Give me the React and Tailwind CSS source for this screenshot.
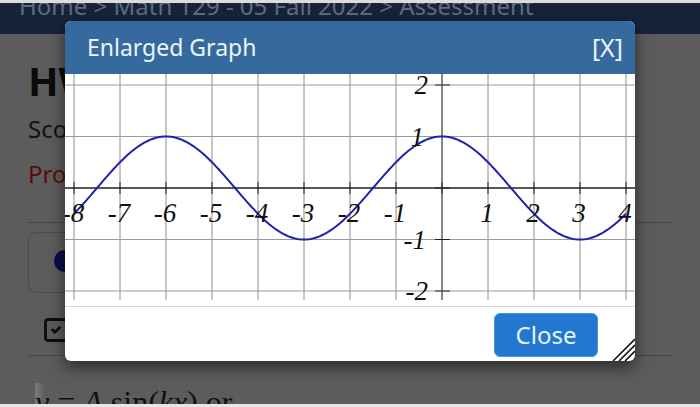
import { SquareCheck } from "lucide-react";

const GRAPH_W = 570;
const GRAPH_H = 231;
const X0 = 377;
const Y0 = 114;
const UX = 46;
const UY = 51.5;

const px = (x) => X0 + x * UX;
const py = (y) => Y0 - y * UY;

const xs = [-8, -7, -6, -5, -4, -3, -2, -1, 0, 1, 2, 3, 4];
const ys = [2, 1, 0, -1, -2];

const curve = Array.from({ length: 241 }, (_, i) => {
  const x = -8 + (i * 12) / 240;
  return `${px(x).toFixed(1)},${py(Math.cos((Math.PI * x) / 3)).toFixed(1)}`;
}).join(" ");

function Graph() {
  return (
    <svg width={GRAPH_W} height={GRAPH_H} className="block overflow-visible">
      {xs.map((x) => (
        <line
          key={`v${x}`}
          x1={px(x)}
          x2={px(x)}
          y1={0}
          y2={226}
          stroke={x === 0 ? "#111" : "#8c8c8c"}
          strokeWidth={1}
        />
      ))}
      {ys.map((y) => (
        <line
          key={`h${y}`}
          x1={0}
          x2={GRAPH_W}
          y1={py(y)}
          y2={py(y)}
          stroke={y === 0 ? "#222" : "#9a9a9a"}
          strokeWidth={y === 0 ? 1.3 : 1}
        />
      ))}
      {xs.map((x) => (
        <line key={`tx${x}`} x1={px(x)} x2={px(x)} y1={Y0 - 6} y2={Y0 + 6} stroke="#222" />
      ))}
      {ys.map((y) => (
        <line key={`ty${y}`} x1={X0 - 7} x2={X0 + 8} y1={py(y)} y2={py(y)} stroke="#222" />
      ))}
      <polyline points={curve} fill="none" stroke="#2020aa" strokeWidth={2} />
      <g fontFamily='"Liberation Serif", serif' fontStyle="italic" fontSize={27} fill="#111">
        {xs
          .filter((x) => x !== 0)
          .map((x) => (
            <text key={`lx${x}`} x={px(x) - 1} y={148} textAnchor="middle">
              {x < 0 ? `-${-x}` : x}
            </text>
          ))}
        <text x={363} y={20} textAnchor="end">2</text>
        <text x={359} y={72} textAnchor="end">1</text>
        <text x={361} y={175} textAnchor="end">-1</text>
        <text x={363} y={226} textAnchor="end">-2</text>
      </g>
    </svg>
  );
}

function Dialog() {
  return (
    <div className="absolute left-[65px] top-[21px] w-[570px] h-[340px] bg-white rounded-md overflow-hidden shadow-[0_6px_16px_rgba(0,0,0,0.55)] flex flex-col">
      <div className="h-[53px] bg-[#366a9e] flex items-center justify-between pl-[22px] pr-[12px] text-[#eaf4fb]">
        <span className="text-[23px] leading-none">Enlarged Graph</span>
        <span className="text-[25px] leading-none">[X]</span>
      </div>
      <div className="h-[232px] overflow-hidden">
        <Graph />
      </div>
      <div className="flex-1 border-t border-[#d6d6d6] flex justify-end items-start pt-[6px] pr-[37px] relative">
        <button className="w-[104px] h-[44px] rounded-md bg-[#2277d1] border border-[#4f95dc] text-[#eaf4fd] text-[24px] leading-none">
          Close
        </button>
        <svg width="24" height="24" className="absolute right-0 bottom-0">
          <line x1="24" y1="2" x2="2" y2="24" stroke="#111" strokeWidth="1.6" />
          <line x1="24" y1="8" x2="8" y2="24" stroke="#111" strokeWidth="1.6" />
          <line x1="24" y1="14" x2="14" y2="24" stroke="#111" strokeWidth="1.6" />
        </svg>
      </div>
    </div>
  );
}

export default function App() {
  return (
    <div className="relative w-[700px] h-[407px] overflow-hidden bg-[#5c5c5c] flex flex-col font-['Noto_Sans',sans-serif]">
      <div className="h-[3px] bg-[#dcdcdc]" />
      <div className="h-[31px] bg-[#17233a] overflow-hidden pl-[19px]">
        <div className="text-[24px] leading-[24px] -mt-[9px] text-[#5f6b7e] whitespace-nowrap">
          Home &gt; Math 129 - 05 Fall 2022 &gt; Assessment
        </div>
      </div>

      <main className="flex-1 overflow-hidden px-[28px]">
        <h1 className="mt-[27px] text-[40px] leading-[40px] font-bold text-[#0b0b0b]">HW 5.6</h1>
        <p className="mt-[16px] text-[24px] leading-[24px] text-[#121212]">Score: 8/10</p>
        <p className="mt-[21px] text-[24px] leading-[24px] text-[#5a0c0c]">Progress saved</p>
        <hr className="mt-[36px] border-[#474747]" />
        <div className="mt-[9px] h-[61px] w-[560px] rounded-lg border border-[#4a4a4a] pl-[25px] pt-[17px]">
          <div className="w-[22px] h-[22px] rounded-full bg-[#0c0c4a]" />
        </div>
        <div className="mt-[23px] pl-[14px] h-[27px]">
          <SquareCheck size={28} strokeWidth={2.4} className="text-[#0d0d0d]" />
        </div>
        <hr className="mt-[12px] border-[#474747]" />
        <div className="mt-[27px] flex items-start">
          <div className="w-[10px] h-[24px] ml-[7px] bg-gradient-to-r from-[#7a7a7a] to-[#5c5c5c]" />
          <span className="mt-[3px] -ml-[10px] text-[32px] leading-[32px] text-[#101010] whitespace-nowrap font-['Liberation_Serif',serif]">
            <i>y</i> = <i>A</i> sin(<i>kx</i>) or
          </span>
        </div>
      </main>
      <div className="h-[3px] bg-[#e6e6e6]" />

      <Dialog />
    </div>
  );
}
